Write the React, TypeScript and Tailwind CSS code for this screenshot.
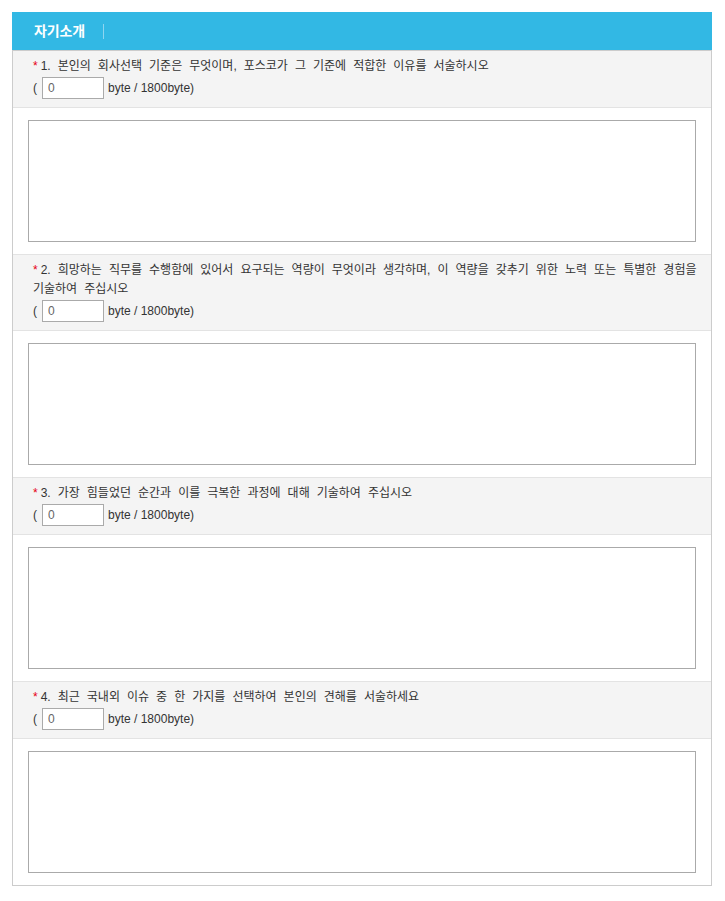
import { useState } from "react";

const questions = [
  "1. 본인의 회사선택 기준은 무엇이며, 포스코가 그 기준에 적합한 이유를 서술하시오",
  "2. 희망하는 직무를 수행함에 있어서 요구되는 역량이 무엇이라 생각하며, 이 역량을 갖추기 위한 노력 또는 특별한 경험을 기술하여 주십시오",
  "3. 가장 힘들었던 순간과 이를 극복한 과정에 대해 기술하여 주십시오",
  "4. 최근 국내외 이슈 중 한 가지를 선택하여 본인의 견해를 서술하세요",
];

function QuestionBlock({ index, title }: { index: number; title: string }) {
  const [text, setText] = useState("");
  const bytes = Array.from(text).reduce((sum, ch) => sum + (ch.charCodeAt(0) > 127 ? 2 : 1), 0);
  const last = index === questions.length - 1;

  return (
    <>
      <div className="border-b border-[#e3e3e3] bg-[#f4f4f4] pb-[7px] pl-[20px] pr-[10px] pt-[6px]">
        <p className="leading-[19px] [word-spacing:3.7px]">
          <span className="mr-[3px] text-[#e60012]">*</span>
          {title}
        </p>
        <div className="flex h-[24px] items-center">
          <span>(</span>
          <input
            readOnly
            value={bytes}
            className="ml-[5px] h-[22px] w-[62px] border border-[#aaaaaa] bg-white px-[5px] text-[12px] text-[#666] outline-none"
          />
          <span className="ml-[4px]">byte / 1800byte)</span>
        </div>
      </div>
      <div className={`px-[15px] py-[12px] ${last ? "" : "border-b border-[#e3e3e3]"}`}>
        <textarea
          value={text}
          onChange={(event) => setText(event.target.value)}
          className="block h-[122px] w-full resize-none border border-[#aaaaaa] bg-white p-[5px] outline-none"
        />
      </div>
    </>
  );
}

export default function App() {
  return (
    <div
      className="min-h-screen bg-white pl-[12px] pt-[12px] text-[12px] text-[#333]"
      style={{ fontFamily: "'Liberation Sans', 'Noto Sans CJK KR', sans-serif" }}
    >
      <div className="w-[700px]">
        <div className="flex h-[38px] items-center bg-[#32b8e4] pl-[22px]">
          <h2 className="text-[14px] font-bold tracking-[-0.1px] text-white">자기소개</h2>
          <span className="ml-[18px] h-[15px] w-px bg-[#8ed5f0]" />
        </div>
        <div className="border border-[#cccccc]">
          {questions.map((title, index) => (
            <QuestionBlock key={index} index={index} title={title} />
          ))}
        </div>
      </div>
    </div>
  );
}
